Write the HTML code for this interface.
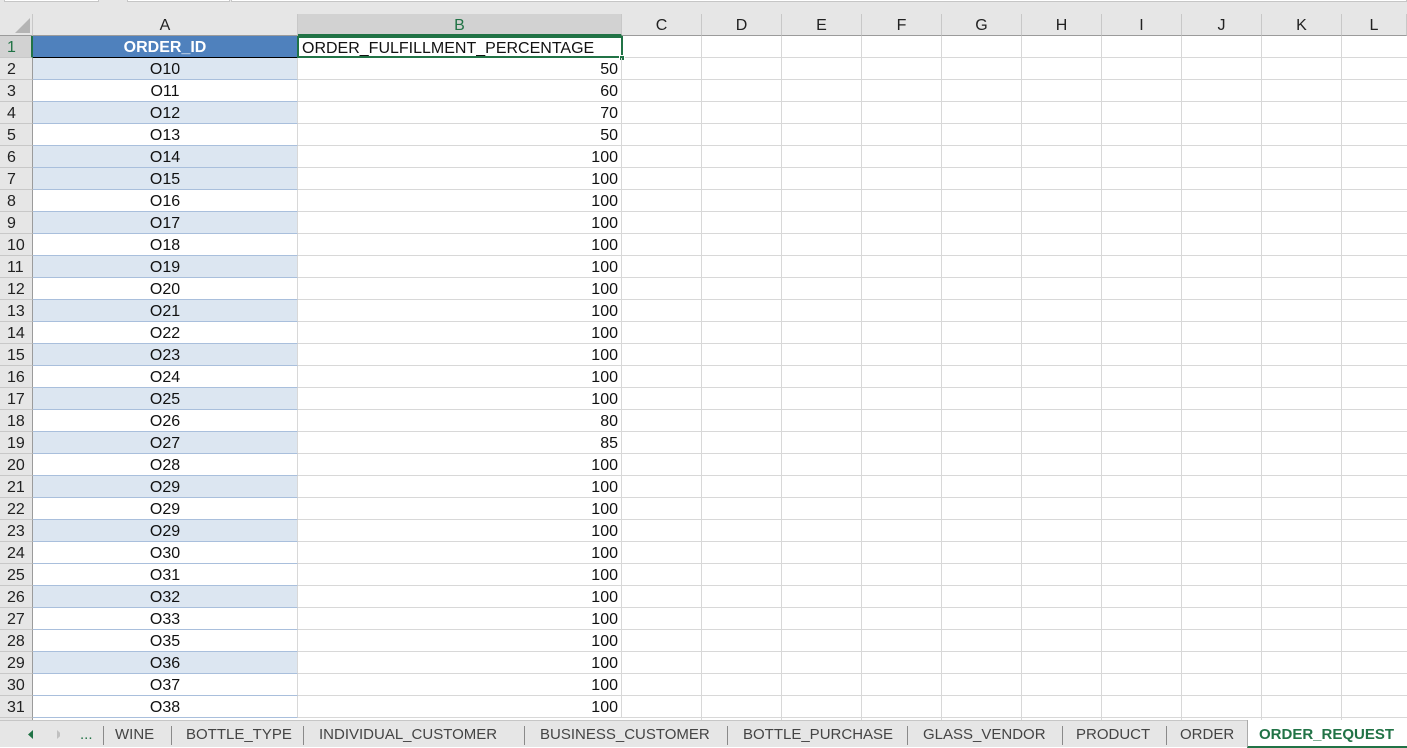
<!DOCTYPE html>
<html><head><meta charset="utf-8"><style>
*{margin:0;padding:0;box-sizing:border-box}
body{width:1407px;height:747px;overflow:hidden;background:#fff;font-family:"Liberation Sans",Arial,sans-serif;position:relative}
.top{position:absolute;left:0;top:0;width:1407px;height:14px;background:#e6e6e6}
.top div{position:absolute;top:-2px;height:4px;background:#fff;border:1px solid #c6c6c6}
.ch{position:absolute;top:14px;height:22px;background:#e6e6e6;border-right:1px solid #c8c8c8;border-bottom:1px solid #9b9b9b;font-size:16px;text-align:center;line-height:23px;color:#222}
.grid{position:absolute;left:622px;top:36px;width:785px;height:684px;
background-image:repeating-linear-gradient(to bottom,transparent 0,transparent 21px,#d8d8d8 21px,#d8d8d8 22px),repeating-linear-gradient(to right,transparent 0,transparent 79px,#d8d8d8 79px,#d8d8d8 80px)}
.r{position:absolute;left:0;height:22px;width:622px;font-size:16px;line-height:23px}
.rh{position:absolute;left:0;top:0;width:33px;height:22px;background:#e6e6e6;border-right:1px solid #9b9b9b;border-bottom:1px solid #c8c8c8;padding-left:7px;color:#222;font-size:16px}
.a{position:absolute;left:33px;top:0;width:265px;height:22px;border-bottom:1px solid #a9bfdc;text-align:center;color:#111;background:#fff;border-right:1px solid #d8d8d8}
.a.b{background:#dce6f1}
.bb{position:absolute;left:298px;top:0;width:324px;height:22px;border-bottom:1px solid #d8d8d8;border-right:1px solid #d8d8d8;text-align:right;padding-right:3px;color:#111}
.tabs{position:absolute;left:0;top:720px;width:1407px;height:27px;background:#e6e6e6;border-top:1px solid #c6c6c6;font-size:15px;color:#444}
.t{position:absolute;top:4px;height:20px;line-height:20px}
.sep{position:absolute;top:5px;width:1px;height:19px;background:#8a8a8a}
</style></head><body>
<div class="top"><div style="left:4px;width:95px"></div><div style="left:127px;width:103px"></div><div style="left:231px;width:1176px"></div></div>
<div class="ch" style="left:0;width:33px;border-right:1px solid #c8c8c8"><svg width="33" height="22" style="position:absolute;left:0;top:0"><polygon points="30,4 30,19 15,19" fill="#b4b4b4"/></svg></div>
<div class="ch" style="left:33px;width:265px">A</div>
<div class="ch" style="left:298px;width:324px;background:#d2d2d2;color:#217346;border-bottom:2px solid #217346">B</div>
<div class="ch" style="left:622px;width:80px">C</div>
<div class="ch" style="left:702px;width:80px">D</div>
<div class="ch" style="left:782px;width:80px">E</div>
<div class="ch" style="left:862px;width:80px">F</div>
<div class="ch" style="left:942px;width:80px">G</div>
<div class="ch" style="left:1022px;width:80px">H</div>
<div class="ch" style="left:1102px;width:80px">I</div>
<div class="ch" style="left:1182px;width:80px">J</div>
<div class="ch" style="left:1262px;width:80px">K</div>
<div class="ch" style="left:1342px;width:65px">L</div>
<div class="grid"></div>

<div class="r" style="top:36px"><div class="rh" style="background:#d2d2d2;border-right:2px solid #217346;color:#217346">1</div><div class="a" style="background:#4f81bd;color:#fff;font-weight:bold;border-bottom:1px solid #000">ORDER_ID</div><div class="bb" style="text-align:left;padding-left:3px;border:2px solid #217346;left:297px;width:326px;line-height:21px">ORDER_FULFILLMENT_PERCENTAGE</div><div style="position:absolute;left:619px;top:19px;width:6px;height:6px;background:#217346;border:1px solid #fff"></div></div>
<div class="r" style="top:58px"><div class="rh">2</div><div class="a b">O10</div><div class="bb">50</div></div>
<div class="r" style="top:80px"><div class="rh">3</div><div class="a">O11</div><div class="bb">60</div></div>
<div class="r" style="top:102px"><div class="rh">4</div><div class="a b">O12</div><div class="bb">70</div></div>
<div class="r" style="top:124px"><div class="rh">5</div><div class="a">O13</div><div class="bb">50</div></div>
<div class="r" style="top:146px"><div class="rh">6</div><div class="a b">O14</div><div class="bb">100</div></div>
<div class="r" style="top:168px"><div class="rh">7</div><div class="a b">O15</div><div class="bb">100</div></div>
<div class="r" style="top:190px"><div class="rh">8</div><div class="a">O16</div><div class="bb">100</div></div>
<div class="r" style="top:212px"><div class="rh">9</div><div class="a b">O17</div><div class="bb">100</div></div>
<div class="r" style="top:234px"><div class="rh">10</div><div class="a">O18</div><div class="bb">100</div></div>
<div class="r" style="top:256px"><div class="rh">11</div><div class="a b">O19</div><div class="bb">100</div></div>
<div class="r" style="top:278px"><div class="rh">12</div><div class="a">O20</div><div class="bb">100</div></div>
<div class="r" style="top:300px"><div class="rh">13</div><div class="a b">O21</div><div class="bb">100</div></div>
<div class="r" style="top:322px"><div class="rh">14</div><div class="a">O22</div><div class="bb">100</div></div>
<div class="r" style="top:344px"><div class="rh">15</div><div class="a b">O23</div><div class="bb">100</div></div>
<div class="r" style="top:366px"><div class="rh">16</div><div class="a">O24</div><div class="bb">100</div></div>
<div class="r" style="top:388px"><div class="rh">17</div><div class="a b">O25</div><div class="bb">100</div></div>
<div class="r" style="top:410px"><div class="rh">18</div><div class="a">O26</div><div class="bb">80</div></div>
<div class="r" style="top:432px"><div class="rh">19</div><div class="a b">O27</div><div class="bb">85</div></div>
<div class="r" style="top:454px"><div class="rh">20</div><div class="a">O28</div><div class="bb">100</div></div>
<div class="r" style="top:476px"><div class="rh">21</div><div class="a b">O29</div><div class="bb">100</div></div>
<div class="r" style="top:498px"><div class="rh">22</div><div class="a">O29</div><div class="bb">100</div></div>
<div class="r" style="top:520px"><div class="rh">23</div><div class="a b">O29</div><div class="bb">100</div></div>
<div class="r" style="top:542px"><div class="rh">24</div><div class="a">O30</div><div class="bb">100</div></div>
<div class="r" style="top:564px"><div class="rh">25</div><div class="a">O31</div><div class="bb">100</div></div>
<div class="r" style="top:586px"><div class="rh">26</div><div class="a b">O32</div><div class="bb">100</div></div>
<div class="r" style="top:608px"><div class="rh">27</div><div class="a">O33</div><div class="bb">100</div></div>
<div class="r" style="top:630px"><div class="rh">28</div><div class="a">O35</div><div class="bb">100</div></div>
<div class="r" style="top:652px"><div class="rh">29</div><div class="a b">O36</div><div class="bb">100</div></div>
<div class="r" style="top:674px"><div class="rh">30</div><div class="a">O37</div><div class="bb">100</div></div>
<div class="r" style="top:696px"><div class="rh">31</div><div class="a">O38</div><div class="bb">100</div></div>
<div class="r" style="top:718px;height:3px"><div class="rh" style="height:3px"></div></div>

<div class="tabs">
<svg width="60" height="26" style="position:absolute;left:0;top:0"><polygon points="33,9 33,18 28,13.5" fill="#217346"/><polygon points="57,9 57,18 62,13.5" fill="#c0c0c0"/></svg>
<div class="t" style="left:80px;color:#217346">...</div>
<div class="sep" style="left:103px"></div>
<div class="t" style="left:115px">WINE</div>
<div class="sep" style="left:171px"></div>
<div class="t" style="left:186px">BOTTLE_TYPE</div>
<div class="sep" style="left:303px"></div>
<div class="t" style="left:319px">INDIVIDUAL_CUSTOMER</div>
<div class="sep" style="left:524px"></div>
<div class="t" style="left:540px">BUSINESS_CUSTOMER</div>
<div class="sep" style="left:727px"></div>
<div class="t" style="left:743px">BOTTLE_PURCHASE</div>
<div class="sep" style="left:907px"></div>
<div class="t" style="left:923px">GLASS_VENDOR</div>
<div class="sep" style="left:1062px"></div>
<div class="t" style="left:1076px">PRODUCT</div>
<div class="sep" style="left:1166px"></div>
<div class="t" style="left:1180px">ORDER</div>
<div style="position:absolute;left:1247px;top:-1px;width:160px;height:28px;background:#fff;border-left:1px solid #aaa;border-bottom:2px solid #217346"></div>
<div class="t" style="left:1259px;color:#217346;font-weight:bold">ORDER_REQUEST</div>
</div>
</body></html>
